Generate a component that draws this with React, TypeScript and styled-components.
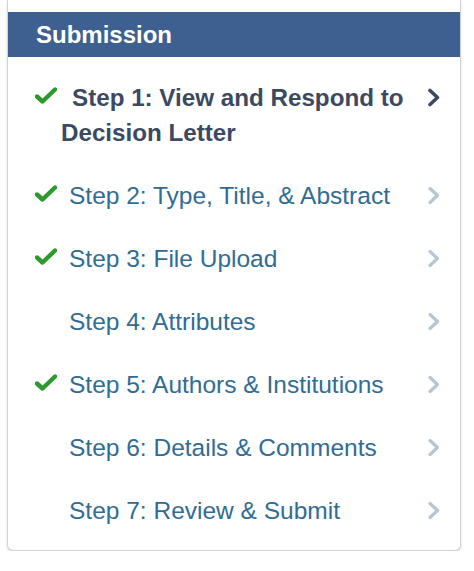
import React from "react"
import styled, {createGlobalStyle} from "styled-components"

const GlobalStyle = createGlobalStyle`
  html, body {
    margin: 0;
    padding: 0;
    background: #ffffff;
  }
  body {
    font-family: "Liberation Sans", Arial, sans-serif;
  }
`

const Card = styled.section`
  width: 454px;
  height: 551px;
  margin-left: 7px;
  box-sizing: border-box;
  padding-top: 12px;
  border: 1px solid #d3d3d3;
  border-top: none;
  border-radius: 0 0 6px 6px;
  box-shadow: 0 2px 3px rgba(0, 0, 0, 0.12);
  background: #ffffff;
`

const Header = styled.h2`
  margin: 0;
  height: 45px;
  display: flex;
  align-items: center;
  padding-left: 28px;
  background: #3d6090;
  color: #ffffff;
  font-size: 24px;
  font-weight: 700;
`

const StepList = styled.ul`
  list-style: none;
  margin: 0;
  padding: 23px 0 0;
  display: flex;
  flex-direction: column;
  gap: 28px;
`

const Step = styled.li`
  position: relative;
  display: flex;
  align-items: flex-start;
  padding-left: 53px;
  padding-right: 18px;
`

const Check = styled.span`
  position: absolute;
  left: 27px;
  top: 7px;
  width: 22px;
  height: 17px;
  svg { display: block; }
`

const Label = styled.a<{$current?: boolean}>`
  flex: 1;
  font-size: ${p => p.$current ? "24.2px" : "24.5px"};
  line-height: 35px;
  text-decoration: none;
  color: ${p => p.$current ? "#3b4962" : "#316c94"};
  font-weight: ${p => p.$current ? 700 : 400};
  padding-left: ${p => p.$current ? "0" : "8px"};
  text-indent: ${p => p.$current ? "11px" : "0"};
`

const Chevron = styled.span<{$current?: boolean}>`
  flex: none;
  width: 16px;
  height: 35px;
  display: flex;
  align-items: center;
  color: ${p => p.$current ? "#3b4962" : "#b5c7d3"};
  svg { display: block; }
`

const CheckIcon = () => (
  <svg width="22" height="17" viewBox="0 0 22 17">
    <path d="M2 9.5 L7.5 14.5 L20 2.5" fill="none" stroke="#2c9a2c" strokeWidth="4.4" strokeLinecap="round" strokeLinejoin="round"/>
  </svg>
)

const ChevronIcon = ({bold}: {bold?: boolean}) => (
  <svg width="15" height="19" viewBox="0 0 15 19">
    <path d="M4 2.5 L11.5 9.5 L4 16.5" fill="none" stroke="currentColor" strokeWidth={bold ? 3.6 : 3.2} strokeLinecap="round" strokeLinejoin="round"/>
  </svg>
)

const steps = [
  {label: "Step 1: View and Respond to Decision Letter", done: true, current: true},
  {label: "Step 2: Type, Title, & Abstract", done: true},
  {label: "Step 3: File Upload", done: true},
  {label: "Step 4: Attributes", done: false},
  {label: "Step 5: Authors & Institutions", done: true},
  {label: "Step 6: Details & Comments", done: false},
  {label: "Step 7: Review & Submit", done: false},
]

export default function App() {
  return (
    <>
      <GlobalStyle/>
      <Card>
        <Header>Submission</Header>
        <StepList>
          {steps.map(step => (
            <Step key={step.label}>
              {step.done && <Check><CheckIcon/></Check>}
              <Label href="#" $current={step.current}>{step.label}</Label>
              <Chevron $current={step.current}><ChevronIcon bold={step.current}/></Chevron>
            </Step>
          ))}
        </StepList>
      </Card>
    </>
  )
}
